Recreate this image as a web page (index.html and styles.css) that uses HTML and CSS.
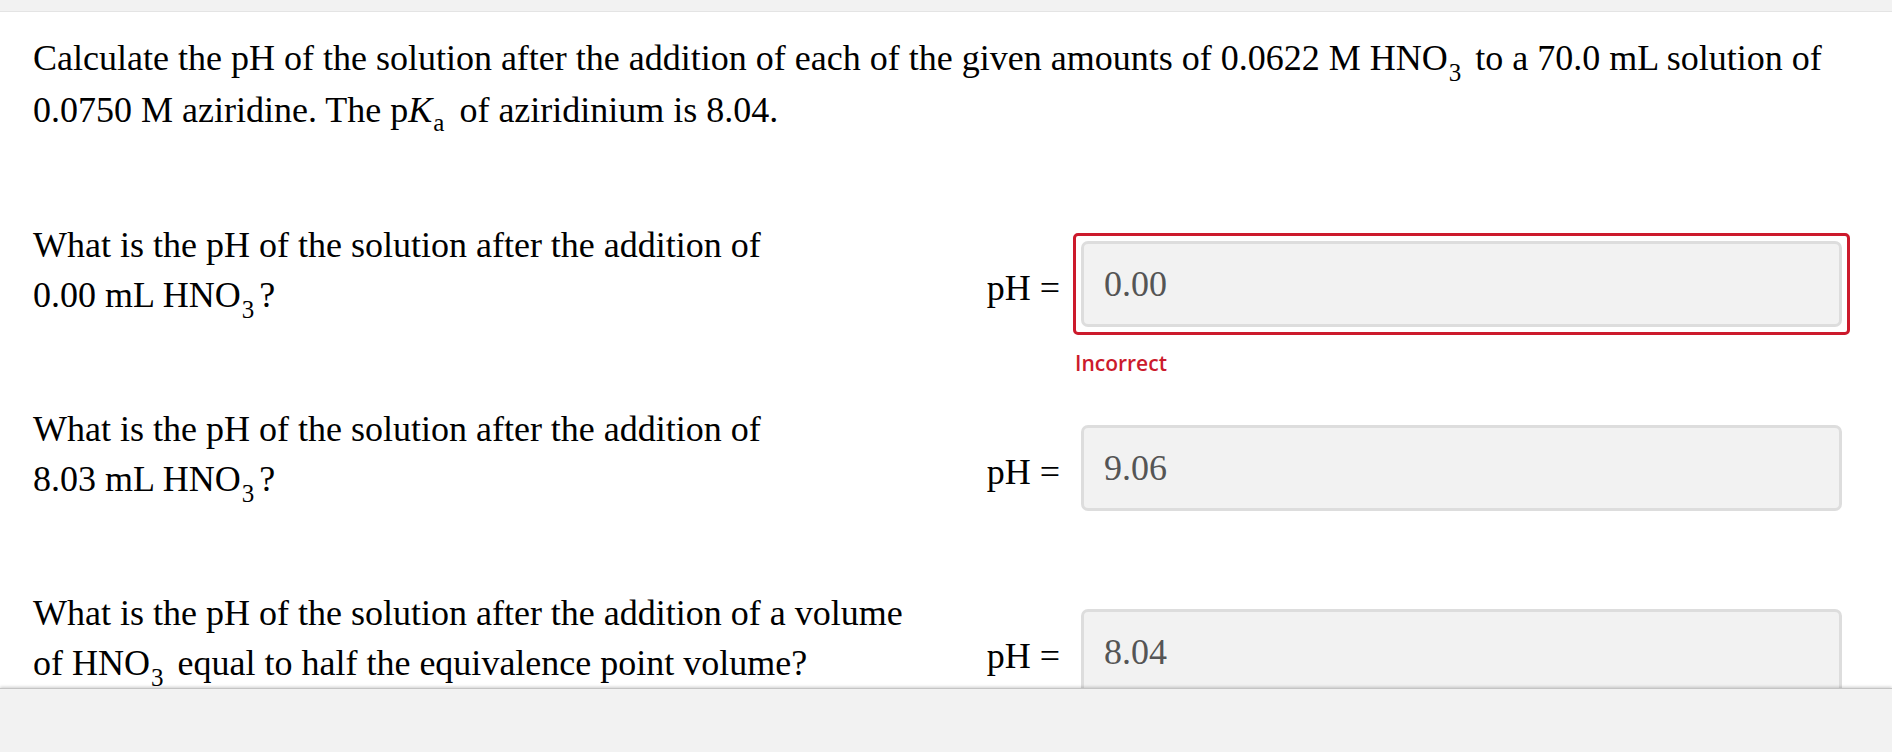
FILE: index.html
```html
<!DOCTYPE html>
<html>
<head>
<meta charset="utf-8">
<link rel="stylesheet" href="styles.css">
</head>
<body>
<div class="page">
  <div class="topbar"></div>
  <main class="content">
    <p class="intro">Calculate the pH of the solution after the addition of each of the given amounts of 0.0622 M HNO<span class="sub">3</span> to a 70.0 mL solution of<br>0.0750 M aziridine. The p<i>K</i><span class="sub sub-a">a</span> of aziridinium is 8.04.</p>

    <div class="question">
      <div class="qtext">What is the pH of the solution after the addition of<br>0.00 mL HNO<span class="sub">3</span>?</div>
      <div class="label">pH =</div>
      <div class="answer">
        <div class="frame incorrect"><div class="field">0.00</div></div>
        <div class="feedback">Incorrect</div>
      </div>
    </div>

    <div class="question">
      <div class="qtext">What is the pH of the solution after the addition of<br>8.03 mL HNO<span class="sub">3</span>?</div>
      <div class="label">pH =</div>
      <div class="answer">
        <div class="frame"><div class="field">9.06</div></div>
        <div class="feedback"></div>
      </div>
    </div>

    <div class="question">
      <div class="qtext">What is the pH of the solution after the addition of a volume<br>of HNO<span class="sub">3</span> equal to half the equivalence point volume?</div>
      <div class="label">pH =</div>
      <div class="answer">
        <div class="frame"><div class="field">8.04</div></div>
        <div class="feedback"></div>
      </div>
    </div>
  </main>
  <footer class="footer"></footer>
</div>
</body>
</html>
```
FILE: styles.css
```css
html, body {
  margin: 0;
  padding: 0;
  height: 100%;
  background: #ffffff;
}

.page {
  display: flex;
  flex-direction: column;
  height: 100vh;
  overflow: hidden;
}

.topbar {
  flex: 0 0 11px;
  background: #f2f2f2;
  border-bottom: 1px solid #e4e4e4;
}

.content {
  flex: 1 1 auto;
  overflow: hidden;
  padding: 20px 42px 0 33px;
  font-family: "Liberation Serif", "Times New Roman", serif;
  font-size: 36px;
  color: #000;
}

.intro {
  margin: 0 0 84px 0;
  line-height: 52px;
  white-space: nowrap;
}

.sub {
  position: relative;
  top: 11px;
  font-size: 25px;
  line-height: 0;
  margin-left: 1px;
  margin-right: 5px;
}

.sub-a {
  top: 9px;
  margin-right: 6px;
}

.question {
  display: grid;
  grid-template-columns: 1fr auto 777px;
  column-gap: 13px;
  align-items: start;
  margin-bottom: 26px;
}

.qtext {
  line-height: 50px;
  white-space: nowrap;
}

.label {
  margin-top: 43px;
  line-height: 50px;
  white-space: nowrap;
}

.answer {
  margin-top: 13px;
  display: flex;
  flex-direction: column;
}

.frame {
  border: 3px solid transparent;
  border-radius: 5px;
  padding: 5px;
}

.frame.incorrect {
  border-color: #cc1a2c;
}

.field {
  height: 80px;
  line-height: 80px;
  padding: 0 20px;
  background: #f2f2f2;
  border: 3px solid #dddddd;
  border-radius: 7px;
  color: #555555;
}

.feedback {
  margin-top: 13px;
  height: 30px;
  line-height: 30px;
  padding-left: 2px;
  font-family: "Open Sans", "Liberation Sans", sans-serif;
  font-weight: 600;
  font-size: 21px;
  color: #cc1a2c;
}

.footer {
  flex: 0 0 63px;
  background: #f2f2f2;
  border-top: 1px solid #c4c4c4;
  box-shadow: 0 -1px 3px rgba(0, 0, 0, 0.2);
  position: relative;
  z-index: 2;
}
```
